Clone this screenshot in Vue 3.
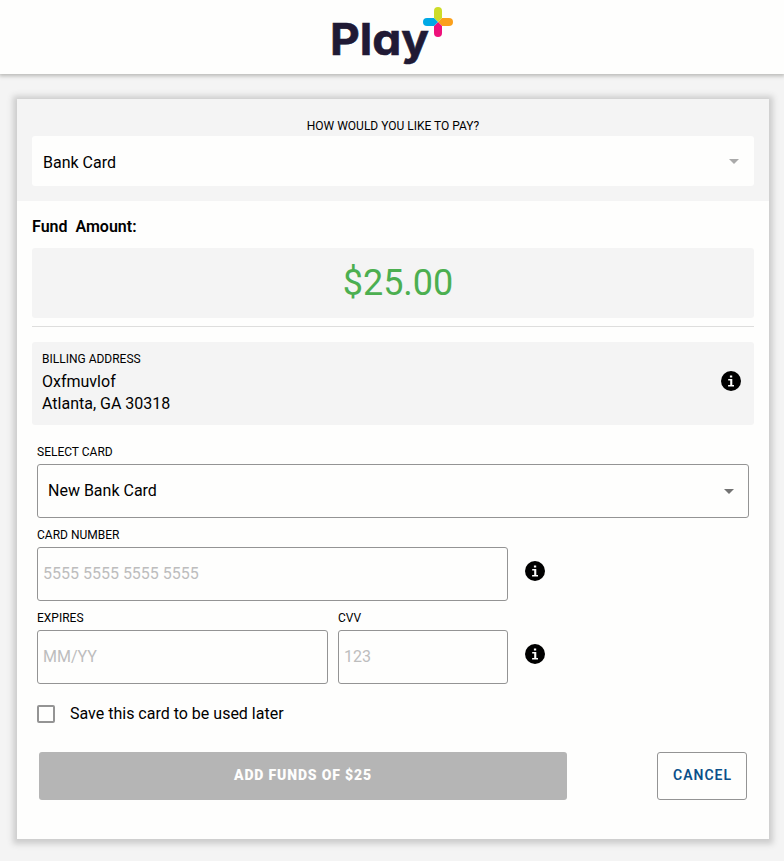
<template>
  <div class="page">
    <header class="top-bar">
      <svg class="logo" width="124" height="66" viewBox="0 0 124 66">
        <text x="-2" y="50" textLength="99" lengthAdjust="spacingAndGlyphs" class="logo-text">Play</text>
        <path d="M106 17 L102 13 V6 a4 4 0 0 1 8 0 V13 Z" fill="#cddc29" />
        <path d="M106 17 L110 13 H117 a4 4 0 0 1 0 8 H110 Z" fill="#fba01c" />
        <path d="M106 17 L110 21 V28 a4 4 0 0 1 -8 0 V21 Z" fill="#ee127b" />
        <path d="M106 17 L102 21 H95 a4 4 0 0 1 0 -8 H102 Z" fill="#00a9e5" />
      </svg>
    </header>

    <main class="panel">
      <section class="pay-method">
        <label class="label">HOW WOULD YOU LIKE TO PAY?</label>
        <div class="select plain">
          <span>{{ payMethod }}</span>
          <i class="caret"></i>
        </div>
      </section>

      <section class="content">
        <h2 class="fund-title">Fund&nbsp; Amount:</h2>
        <div class="amount">${{ amount.toFixed(2) }}</div>
        <hr />

        <div class="billing">
          <div class="address">
            <div class="label">BILLING ADDRESS</div>
            <div v-for="line in address" :key="line" class="address-line">{{ line }}</div>
          </div>
          <svg class="info" viewBox="0 0 20 20">
            <circle cx="10" cy="10" r="10" />
            <path d="M8.900 4.400h2.300v2h-2.300z M7.200 8h4.100v6h1.700v1.600H7.100V14H9.200V9.500h-2z" fill="#fefefd" />
          </svg>
        </div>

        <form class="card-form" @submit.prevent>
          <label class="label">SELECT CARD</label>
          <div class="select outlined">
            <span>New Bank Card</span>
            <i class="caret"></i>
          </div>

          <div v-for="(row, index) in rows" :key="index" class="field-row">
            <div v-for="field in row" :key="field.name" class="field" :class="field.name">
              <label class="label" :for="field.name">{{ field.label }}</label>
              <input :id="field.name" v-model="card[field.name]" type="text" :placeholder="field.placeholder" />
            </div>
            <svg class="info" viewBox="0 0 20 20">
              <circle cx="10" cy="10" r="10" />
              <path d="M8.900 4.400h2.300v2h-2.300z M7.200 8h4.100v6h1.700v1.600H7.100V14H9.200V9.500h-2z" fill="#fefefd" />
            </svg>
          </div>

          <label class="save">
            <input v-model="saveCard" type="checkbox" />
            <span>Save this card to be used later</span>
          </label>

          <div class="actions">
            <button class="add" type="submit" disabled>ADD FUNDS OF ${{ amount }}</button>
            <button class="cancel" type="button">CANCEL</button>
          </div>
        </form>
      </section>
    </main>
  </div>
</template>

<script setup>
import { reactive, ref } from "vue";

const payMethod = ref("Bank Card");
const amount = ref(25);
const saveCard = ref(false);
const address = ["Oxfmuvlof", "Atlanta, GA 30318"];

const card = reactive({ number: "", expires: "", cvv: "" });

const rows = [
  [{ name: "number", label: "CARD NUMBER", placeholder: "5555 5555 5555 5555" }],
  [
    { name: "expires", label: "EXPIRES", placeholder: "MM/YY" },
    { name: "cvv", label: "CVV", placeholder: "123" },
  ],
];
</script>

<style>
body {
  margin: 0;
  background: #f4f4f4;
}
</style>

<style scoped>
.page,
.page * {
  box-sizing: border-box;
}

.page {
  height: 861px;
  overflow: hidden;
  font-family: Roboto, sans-serif;
  font-size: 16px;
  color: #000;
}

.top-bar {
  height: 74px;
  padding: 5px 0 0 332px;
  background: #fefefd;
  box-shadow: 0 1px 4px 1px #b8b8b5;
}

.logo {
  display: block;
  overflow: visible;
}

/* cv11 gives the single-storey "a" */
.logo-text {
  font-family: Inter, sans-serif;
  font-size: 44px;
  font-weight: 700;
  font-feature-settings: "cv11";
  fill: #201a35;
  stroke: #201a35;
  stroke-width: 0.6px;
}

.panel {
  width: 752px;
  height: 740px;
  margin: 25px 0 0 17px;
  background: #fefefd;
  box-shadow: 0 1px 6px 4px #ccc;
}

.label {
  display: block;
  font-size: 12px;
  line-height: 16px;
}

.pay-method {
  height: 102px;
  padding: 19px 15px 0;
  background: #f4f4f4;
}

.pay-method .label {
  margin-bottom: 2px;
  text-align: center;
}

.select {
  display: flex;
  align-items: center;
  justify-content: space-between;
  border-radius: 3px;
  background: #fefefd;
}

.select.plain {
  height: 50px;
  padding: 2px 15px 0 11px;
}

.select.outlined {
  height: 54px;
  padding: 0 14px 2px 10px;
  border: 1px solid #949494;
}

.caret {
  border: 5px solid transparent;
  border-top-color: #737373;
  border-bottom: 0;
}

.plain .caret {
  margin-bottom: 2px;
  border-top-color: #aaa;
}

.outlined .caret {
  margin-top: 3px;
}

.content {
  padding: 15px 15px 0;
}

.fund-title {
  margin: 0 0 10px;
  font-size: 16px;
  font-weight: 600;
  line-height: 22px;
}

.amount {
  height: 70px;
  padding-left: 10px;
  border-radius: 3px;
  background: #f4f4f4;
  color: #4caf50;
  font-size: 36px;
  line-height: 71px;
  text-align: center;
}

hr {
  height: 1px;
  margin: 8px 0 15px;
  border: 0;
  background: #dededd;
}

.billing {
  display: flex;
  align-items: center;
  justify-content: space-between;
  height: 83px;
  padding: 0 13px 5px 10px;
  border-radius: 3px;
  background: #f4f4f4;
}

.address {
  padding-top: 4px;
}

.billing .label {
  margin-bottom: 4px;
}

.address-line {
  line-height: 22px;
}

.info {
  flex: none;
  width: 20px;
  height: 20px;
}

.card-form {
  padding: 19px 5px 0;
}

.card-form .label {
  margin-bottom: 4px;
}

.field-row {
  display: flex;
  gap: 10px;
  margin-top: 9px;
}

.field.number {
  width: 471px;
}

.field.expires {
  width: 291px;
}

.field.cvv {
  width: 170px;
}

.field input {
  display: block;
  width: 100%;
  height: 54px;
  padding: 0 5px 2px;
  border: 1px solid #949494;
  border-radius: 3px;
  background: #fefefd;
  color: #000;
  font: inherit;
  outline: none;
}

.field input::placeholder {
  color: #bdbdbd;
}

.field-row .info {
  margin: 34px 0 0 7px;
}

.save {
  display: flex;
  align-items: center;
  gap: 15px;
  height: 20px;
  margin-top: 20px;
}

.save input {
  appearance: none;
  width: 18px;
  height: 18px;
  margin: 0;
  border: 2px solid #949494;
  border-radius: 2px;
}

.save span {
  padding-bottom: 2px;
}

.actions {
  display: flex;
  justify-content: space-between;
  margin-top: 28px;
  padding: 0 2px;
}

.actions button {
  height: 48px;
  padding: 0 0 2px;
  border: 0;
  border-radius: 3px;
  font-family: inherit;
  font-size: 14px;
}

.actions .add {
  width: 528px;
  background: #b5b5b5;
  color: #fefefd;
  font-weight: 900;
  letter-spacing: 0.85px;
}

.actions .cancel {
  width: 90px;
  padding-left: 1px;
  border: 1px solid #949494;
  background: #fefefd;
  color: #0b4f8a;
  font-weight: 600;
  letter-spacing: 1px;
}
</style>
